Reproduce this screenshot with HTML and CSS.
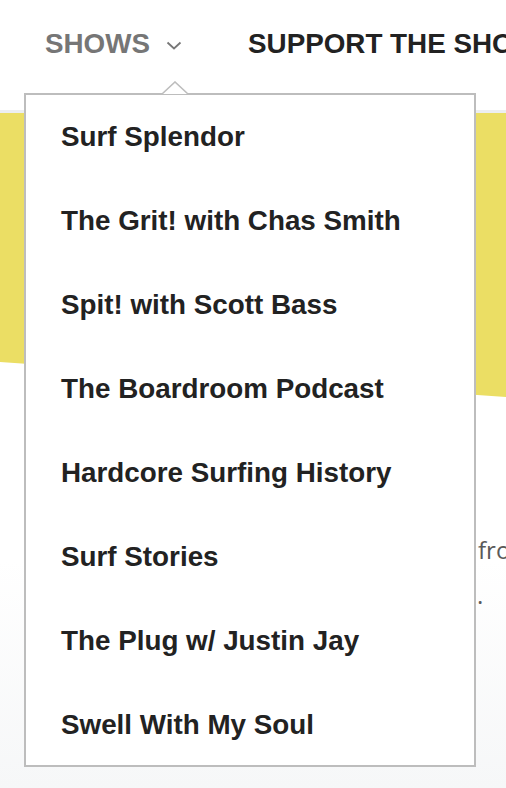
FILE: index.html
```html
<!DOCTYPE html>
<html lang="en">
<head>
<meta charset="utf-8">
<title>Shows</title>
<link rel="stylesheet" href="styles.css">
</head>
<body>
<div class="page">
  <header class="header">
    <nav class="nav">
      <div class="nav-item nav-shows">
        <span>SHOWS</span>
        <svg class="chev" width="16" height="9" viewBox="0 0 16 9"><path d="M1.5 1.5 L8 7.5 L14.5 1.5" fill="none" stroke="#777" stroke-width="1.8"/></svg>
      </div>
      <div class="nav-item nav-support">SUPPORT THE SHOW</div>
    </nav>
  </header>
  <section class="hero"></section>
  <section class="content">
    <p class="line line1">from</p>
    <p class="line line2">.</p>
  </section>

  <div class="dropdown">
    <svg class="caret" width="26" height="14" viewBox="0 0 26 14"><path d="M0 13 L13 1 L26 13" fill="#fff" stroke="#bdbdbd" stroke-width="1.6"/></svg>
    <ul class="menu">
      <li>Surf Splendor</li>
      <li>The Grit! with Chas Smith</li>
      <li>Spit! with Scott Bass</li>
      <li>The Boardroom Podcast</li>
      <li>Hardcore Surfing History</li>
      <li>Surf Stories</li>
      <li>The Plug w/ Justin Jay</li>
      <li>Swell With My Soul</li>
    </ul>
  </div>
</div>
</body>
</html>
```
FILE: styles.css
```css
html, body {
  margin: 0;
  padding: 0;
}
body {
  width: 506px;
  height: 788px;
  overflow: hidden;
  font-family: "Liberation Sans", Arial, Helvetica, sans-serif;
  background: #fff;
}
.page {
  position: relative;
  width: 506px;
  height: 788px;
  overflow: hidden;
  background: linear-gradient(to bottom, #ffffff 0, #ffffff 560px, #f6f7f8 788px);
}
.header {
  height: 110px;
  background: #fff;
  border-bottom: 3px solid #eceef0;
  box-sizing: content-box;
}
.nav {
  display: flex;
  align-items: center;
  height: 100%;
  padding-left: 45px;
  padding-top: 1px;
  box-sizing: border-box;
  white-space: nowrap;
}
.nav-item {
  font-weight: bold;
  font-size: 27.8px;
  line-height: 30px;
}
.nav-shows {
  color: #767676;
  display: flex;
  align-items: center;
  gap: 16px;
  margin-top: -24px;
}
.chev {
  display: block;
  margin-top: 3px;
}
.nav-support {
  color: #222;
  margin-left: 66px;
  margin-top: -24px;
}
.hero {
  height: 284px;
  background: #ebde64;
  clip-path: polygon(0 0, 100% 0, 100% 100%, 0 calc(100% - 35px));
}
.content {
  padding-top: 130px;
  font-family: "Open Sans", sans-serif;
  color: #5a5a5a;
  font-size: 24px;
}
.line {
  margin: 0;
  white-space: nowrap;
  line-height: 45px;
}
.line1 {
  padding-left: 478px;
}
.line2 {
  padding-left: 477px;
}
.dropdown {
  position: absolute;
  left: 24px;
  top: 93px;
  width: 452px;
  height: 674px;
  box-sizing: border-box;
  border: 2px solid #bdbdbd;
  background: #fff;
}
.caret {
  position: absolute;
  left: 136px;
  top: -14px;
  display: block;
}
.menu {
  list-style: none;
  margin: 0;
  padding: 0;
  display: flex;
  flex-direction: column;
}
.menu li {
  height: 84px;
  display: flex;
  align-items: center;
  padding-left: 35px;
  font-weight: bold;
  font-size: 27.8px;
  color: #222;
  white-space: nowrap;
}
```
